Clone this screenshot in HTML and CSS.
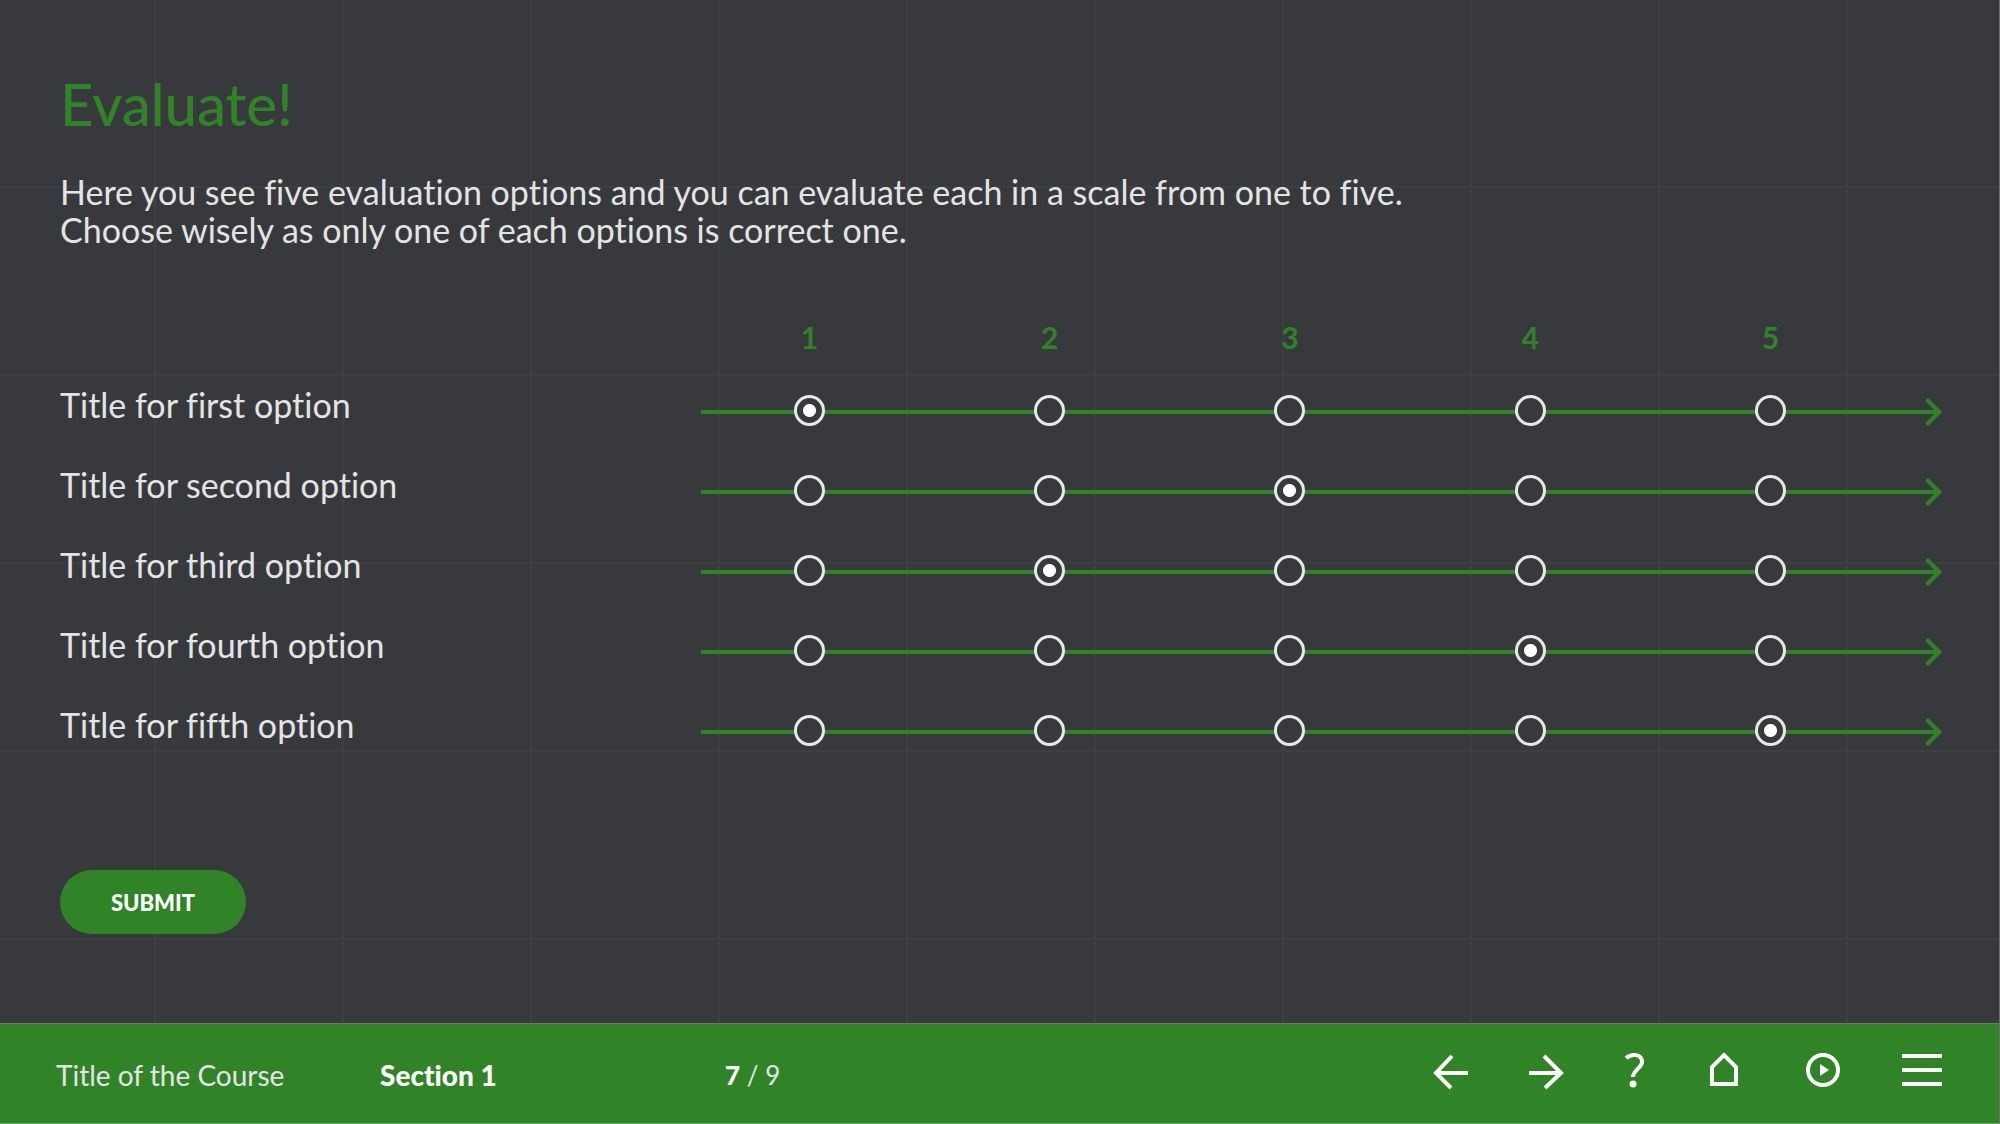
FILE: index.html
```html
<!DOCTYPE html>
<html lang="en">
<head>
    <meta charset="UTF-8">
    <meta name="viewport" content="width=device-width, initial-scale=1.0">
    <title>Evaluate - Title of the Course</title>
    <link rel="stylesheet" href="styles.css">
</head>
<body>
    <main>
        <h1>Evaluate!</h1>
        <p class="intro">Here you see five evaluation options and you can evaluate each in a scale from one to five.<br>
            Choose wisely as only one of each options is correct one.</p>

        <form class="evaluation">
            <div class="row numbers">
                <div class="scale">
                    <span>1</span>
                    <span>2</span>
                    <span>3</span>
                    <span>4</span>
                    <span>5</span>
                </div>
            </div>
            <div class="row" role="radiogroup" aria-labelledby="option1">
                <span class="option-title" id="option1">Title for first option</span>
                <div class="scale line">
                    <input type="radio" name="first" value="1" aria-label="1" checked>
                    <input type="radio" name="first" value="2" aria-label="2">
                    <input type="radio" name="first" value="3" aria-label="3">
                    <input type="radio" name="first" value="4" aria-label="4">
                    <input type="radio" name="first" value="5" aria-label="5">
                </div>
            </div>
            <div class="row" role="radiogroup" aria-labelledby="option2">
                <span class="option-title" id="option2">Title for second option</span>
                <div class="scale line">
                    <input type="radio" name="second" value="1" aria-label="1">
                    <input type="radio" name="second" value="2" aria-label="2">
                    <input type="radio" name="second" value="3" aria-label="3" checked>
                    <input type="radio" name="second" value="4" aria-label="4">
                    <input type="radio" name="second" value="5" aria-label="5">
                </div>
            </div>
            <div class="row" role="radiogroup" aria-labelledby="option3">
                <span class="option-title" id="option3">Title for third option</span>
                <div class="scale line">
                    <input type="radio" name="third" value="1" aria-label="1">
                    <input type="radio" name="third" value="2" aria-label="2" checked>
                    <input type="radio" name="third" value="3" aria-label="3">
                    <input type="radio" name="third" value="4" aria-label="4">
                    <input type="radio" name="third" value="5" aria-label="5">
                </div>
            </div>
            <div class="row" role="radiogroup" aria-labelledby="option4">
                <span class="option-title" id="option4">Title for fourth option</span>
                <div class="scale line">
                    <input type="radio" name="fourth" value="1" aria-label="1">
                    <input type="radio" name="fourth" value="2" aria-label="2">
                    <input type="radio" name="fourth" value="3" aria-label="3">
                    <input type="radio" name="fourth" value="4" aria-label="4" checked>
                    <input type="radio" name="fourth" value="5" aria-label="5">
                </div>
            </div>
            <div class="row" role="radiogroup" aria-labelledby="option5">
                <span class="option-title" id="option5">Title for fifth option</span>
                <div class="scale line">
                    <input type="radio" name="fifth" value="1" aria-label="1">
                    <input type="radio" name="fifth" value="2" aria-label="2">
                    <input type="radio" name="fifth" value="3" aria-label="3">
                    <input type="radio" name="fifth" value="4" aria-label="4">
                    <input type="radio" name="fifth" value="5" aria-label="5" checked>
                </div>
            </div>
            <button type="submit" class="submit-btn">SUBMIT</button>
        </form>
    </main>

    <footer>
        <span class="course">Title of the Course</span>
        <span class="section">Section 1</span>
        <span class="pages"><b>7</b> / 9</span>
        <nav>
            <a href="#" aria-label="Previous">
                <svg width="36" height="36" viewBox="0 0 36 36"><path d="M19 4L3 21L18 36M3 21H35"/></svg>
            </a>
            <a href="#" aria-label="Next">
                <svg width="36" height="36" viewBox="0 0 36 36"><path d="M15 4L32 21L16 36M32 21H0"/></svg>
            </a>
            <a href="#" aria-label="Help">
                <svg width="20" height="36" viewBox="0 0 20 36"><path d="M1 6C7 1 17 2 17 10C17 16 8 18 8 25"/><circle class="solid" cx="8" cy="32" r="3.5"/></svg>
            </a>
            <a href="#" aria-label="Home">
                <svg width="40" height="36" viewBox="0 0 40 36"><path d="M7 32V15L19 3L31 15V32Z"/></svg>
            </a>
            <a href="#" aria-label="Play">
                <svg width="36" height="36" viewBox="0 0 36 36"><circle cx="18" cy="18" r="15"/><path class="solid" d="M15 12L24 18L15 24Z"/></svg>
            </a>
            <a href="#" aria-label="Menu">
                <svg width="42" height="36" viewBox="0 0 42 36"><path d="M1 4H41M1 18H41M1 32H41"/></svg>
            </a>
        </nav>
    </footer>
</body>
</html>
```

FILE: styles.css
```css
*,
*::before,
*::after {
    box-sizing: border-box;
}

body {
    font-family: 'Lato', sans-serif;
    font-variant-ligatures: none;
    margin: 0;
    min-height: 100vh;
    display: flex;
    flex-direction: column;
    color: #e4e4e5;
    /* Thin grid over the dark background */
    background-color: #38393d;
    background-image: linear-gradient(to right, #3e3f43 2px, transparent 2px),
        linear-gradient(to bottom, #3e3f43 2px, transparent 2px);
    background-size: 188px 188px;
    background-position: 154px 186px;
    border-right: 1px solid #6d6f70;
}

main {
    flex: 1;
    padding: 72px 57px 0 60px;
}

h1 {
    margin: 0;
    font-family: 'Lato Medium', 'Lato', sans-serif;
    font-size: 58px;
    line-height: 64px;
    font-weight: 500;
    color: #308427;
}

.intro {
    margin: 37px 0 0;
    font-size: 34px;
    line-height: 38px;
}

.evaluation {
    margin-top: 61px;
}

.row {
    display: grid;
    grid-template-columns: 34% 66%;
    align-items: center;
    height: 80px;
}

.numbers {
    height: 60px;
    padding-bottom: 6px;
    font-size: 30px;
    font-weight: bold;
    color: #308427;
}

.option-title {
    padding-bottom: 10px;
    font-size: 34px;
    line-height: 38px;
}

.scale {
    grid-column: 2;
    display: flex;
    justify-content: space-between;
    padding: 0 156px 0 94px;
    position: relative;
}

.scale span {
    width: 31px;
    text-align: center;
}

/* Green line with the arrow head at the end */
.line::before {
    content: "";
    position: absolute;
    left: 1px;
    right: 3px;
    top: 15px;
    height: 4px;
    background: #308427;
}

.line::after {
    content: "";
    position: absolute;
    right: 4px;
    top: 7px;
    width: 20px;
    height: 20px;
    border: solid #308427;
    border-width: 4px 4px 0 0;
    transform: rotate(45deg);
}

.scale input {
    appearance: none;
    position: relative;
    z-index: 1;
    width: 31px;
    height: 31px;
    margin: 0;
    border: 3px solid #e8e8e8;
    border-radius: 50%;
    background: #38393d;
    cursor: pointer;
}

.scale input:checked {
    background: radial-gradient(circle, #fff 6px, #38393d 7px);
}

.submit-btn {
    display: block;
    width: 186px;
    height: 64px;
    margin-top: 100px;
    border: none;
    border-radius: 32px;
    background: #308427;
    color: #fff;
    font-family: inherit;
    font-size: 22px;
    font-weight: 900;
    cursor: pointer;
}

footer {
    display: flex;
    align-items: center;
    height: 101px;
    padding: 3px 56px 0;
    background: #308427;
    border-top: 1px solid #6d7a6c;
    border-bottom: 1px solid #6aa463;
    font-size: 28px;
}

.course {
    width: 324px;
}

.section {
    width: 345px;
    color: #fff;
    font-weight: 900;
}

.pages {
    font-size: 26px;
}

.pages b {
    color: #fff;
    font-weight: 900;
}

nav {
    display: flex;
    gap: 60px;
    margin-left: auto;
    padding-bottom: 10px;
}

nav svg {
    display: block;
    overflow: visible;
    fill: none;
    stroke: #fff;
    stroke-width: 4;
}

nav .solid {
    fill: #fff;
    stroke: none;
}
```
